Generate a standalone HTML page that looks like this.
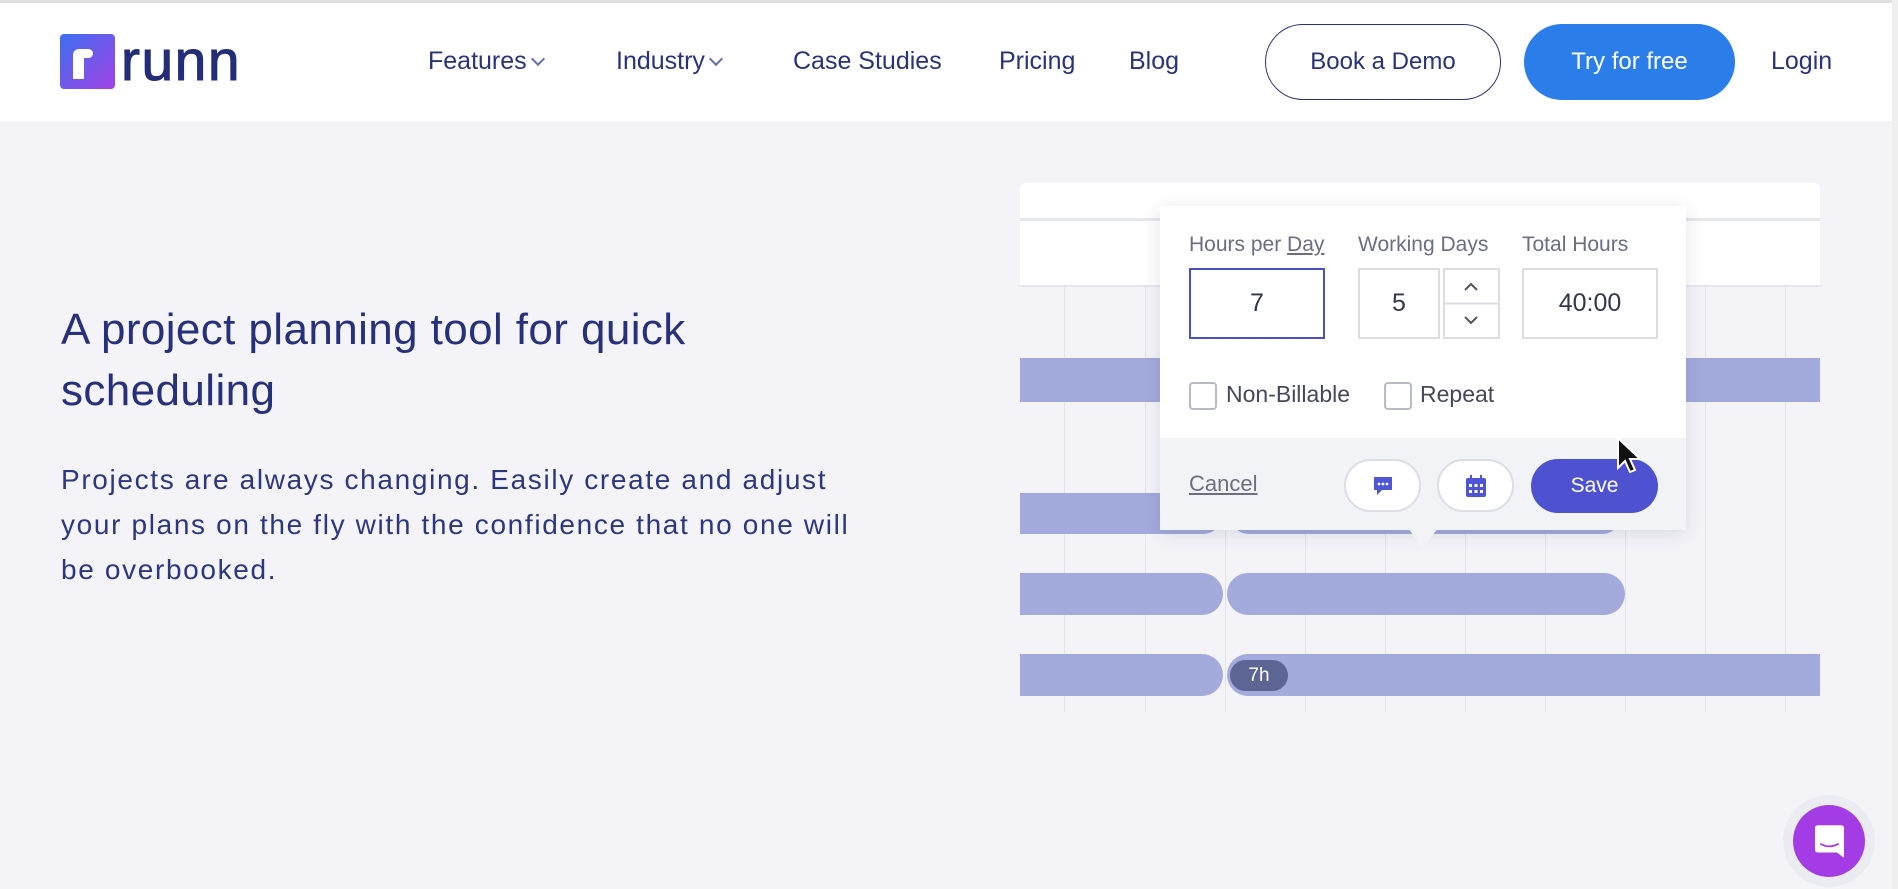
<!DOCTYPE html>
<html><head><meta charset="utf-8"><style>
*{margin:0;padding:0;box-sizing:border-box}
body{width:1898px;height:889px;overflow:hidden;background:#f3f3f8;font-family:"Liberation Sans",sans-serif;position:relative;color:#27307a}
.a{position:absolute}
#nav{left:0;top:0;width:1892px;height:121px;background:#fff;border-top:3px solid #dedee3}
.ni{position:absolute;top:43px;font-size:25px;color:#2a3278;line-height:30px}
.chev{display:inline-block;width:10px;height:10px;border-right:2px solid #6a70b0;border-bottom:2px solid #6a70b0;transform:rotate(45deg);margin-left:6px;position:relative;top:-5px}
h1{position:absolute;left:61px;top:299px;font-size:44px;font-weight:normal;line-height:61px;color:#27307a;letter-spacing:.4px}
p.d{position:absolute;left:61px;top:457px;font-size:28px;line-height:45px;color:#2d3780;letter-spacing:1.65px;width:900px}
.bar{position:absolute;background:#a2abdb}
.vl{position:absolute;top:287px;width:1px;height:425px;background:#e2e4ea}
.lbl{position:absolute;top:233px;font-size:21px;color:#6b6e80}
.box{position:absolute;top:268px;height:71px;border:2px solid #dcdde3;background:#fff;font-size:25px;color:#33374a;display:flex;align-items:center;justify-content:center}
.cb{position:absolute;top:382px;width:28px;height:28px;border:2px solid #b8bac6;border-radius:4px;background:#fff}
.ct{position:absolute;top:381px;font-size:23px;color:#454958}
.rb{position:absolute;top:459px;width:77px;height:53px;border:2px solid #dcdde5;border-radius:27px;background:#fff;display:flex;align-items:center;justify-content:center}
</style></head><body>
<div id="nav" class="a">
  <div class="a" style="left:60px;top:31px;width:55px;height:55px;border-radius:4px;background:linear-gradient(135deg,#3d6ff0,#a143e6)"></div>
  <div class="a" style="left:73px;top:46px;width:11px;height:30px;background:#fff;border-radius:6px 0 0 0"></div>
  <div class="a" style="left:83px;top:46px;width:10px;height:9px;background:#fff;border-radius:0 5px 5px 0"></div>
  <div class="a" style="left:121px;top:25px;font-size:57px;color:#232d78;letter-spacing:1.5px;-webkit-text-stroke:1px #232d78">runn</div>
  <div class="ni" style="left:428px">Features<span class="chev"></span></div>
  <div class="ni" style="left:616px">Industry<span class="chev"></span></div>
  <div class="ni" style="left:793px">Case Studies</div>
  <div class="ni" style="left:999px">Pricing</div>
  <div class="ni" style="left:1129px">Blog</div>
  <div class="a" style="left:1265px;top:21px;width:236px;height:76px;border:1.5px solid #2a3278;border-radius:38px;font-size:24px;color:#2a3278;display:flex;align-items:center;justify-content:center">Book a Demo</div>
  <div class="a" style="left:1524px;top:21px;width:211px;height:76px;background:#2b7de9;border-radius:38px;font-size:24px;color:#fff;display:flex;align-items:center;justify-content:center">Try for free</div>
  <div class="ni" style="left:1771px">Login</div>
</div>
<div class="a" style="left:1892px;top:0;width:6px;height:889px;background:#f0f0f0"></div>

<h1>A project planning tool for quick<br>scheduling</h1>
<p class="d">Projects are always changing. Easily create and adjust<br>your plans on the fly with the confidence that no one will<br>be overbooked.</p>

<div class="a" style="left:1020px;top:183px;width:800px;height:104px;background:#fff;border-radius:6px 6px 0 0;border-bottom:2px solid #e6e7ec"></div>
<div class="a" style="left:1020px;top:218px;width:800px;height:3px;background:#e6e7ec"></div>
<div class="vl" style="left:1064px"></div><div class="vl" style="left:1145px"></div><div class="vl" style="left:1225px"></div><div class="vl" style="left:1305px"></div><div class="vl" style="left:1385px"></div><div class="vl" style="left:1465px"></div><div class="vl" style="left:1545px"></div><div class="vl" style="left:1625px"></div><div class="vl" style="left:1705px"></div><div class="vl" style="left:1785px"></div>

<div class="bar" style="left:1020px;top:358px;width:800px;height:44px"></div>
<div class="bar" style="left:1020px;top:493px;width:203px;height:41px;border-radius:0 20px 20px 0"></div>
<div class="bar" style="left:1229px;top:493px;width:393px;height:41px;border-radius:20px"></div>
<div class="bar" style="left:1020px;top:573px;width:203px;height:42px;border-radius:0 21px 21px 0"></div>
<div class="bar" style="left:1227px;top:573px;width:398px;height:42px;border-radius:21px"></div>
<div class="bar" style="left:1020px;top:654px;width:203px;height:42px;border-radius:0 21px 21px 0"></div>
<div class="bar" style="left:1227px;top:654px;width:593px;height:42px;border-radius:21px 0 0 21px"></div>
<div class="a" style="left:1230px;top:660px;width:58px;height:31px;border-radius:16px;background:#5d6594;color:#fff;font-size:19px;display:flex;align-items:center;justify-content:center">7h</div>

<div class="a" style="left:1160px;top:206px;width:526px;height:324px;background:#fff;box-shadow:0 4px 18px rgba(40,40,80,.12)"></div>
<div class="a" style="left:1160px;top:438px;width:526px;height:92px;background:#f2f3f7"></div>
<div class="a" style="left:1408px;top:528px;width:0;height:0;border-left:15px solid transparent;border-right:15px solid transparent;border-top:20px solid #f2f3f7"></div>
<div class="lbl" style="left:1189px">Hours per <u>Day</u></div>
<div class="lbl" style="left:1358px">Working Days</div>
<div class="lbl" style="left:1522px">Total Hours</div>
<div class="box" style="left:1189px;width:136px;border-color:#4a50c0">7</div>
<div class="box" style="left:1358px;width:82px">5</div>
<div class="box" style="left:1443px;width:57px;height:71px;flex-direction:column;padding:0">
<svg width="57" height="67" viewBox="0 0 57 67"><path d="M22 20l6-6 6 6M22 47l6 6 6-6" stroke="#555" stroke-width="2" fill="none"/><path d="M0 33.5h57" stroke="#dcdde3" stroke-width="2"/></svg></div>
<div class="box" style="left:1522px;width:136px">40:00</div>
<div class="cb" style="left:1189px"></div><div class="ct" style="left:1226px">Non-Billable</div>
<div class="cb" style="left:1384px"></div><div class="ct" style="left:1420px">Repeat</div>
<div class="a" style="left:1189px;top:471px;font-size:22px;color:#6b6e80;text-decoration:underline">Cancel</div>
<div class="rb" style="left:1344px"><svg width="24" height="24" viewBox="0 0 24 24"><path d="M3 3h18v13h-10l-5 5v-5h-3z" fill="#4f55d4"/><circle cx="8" cy="10" r="1.4" fill="#fff"/><circle cx="12" cy="10" r="1.4" fill="#fff"/><circle cx="16" cy="10" r="1.4" fill="#fff"/></svg></div>
<div class="rb" style="left:1437px"><svg width="22" height="24" viewBox="0 0 22 24"><rect x="1" y="4" width="20" height="19" rx="2" fill="#4f55d4"/><rect x="5" y="1" width="2" height="5" fill="#4f55d4"/><rect x="15" y="1" width="2" height="5" fill="#4f55d4"/><g fill="#fff"><rect x="4" y="10" width="3" height="3"/><rect x="9.5" y="10" width="3" height="3"/><rect x="15" y="10" width="3" height="3"/><rect x="4" y="16" width="3" height="3"/><rect x="9.5" y="16" width="3" height="3"/><rect x="15" y="16" width="3" height="3"/></g></svg></div>
<div class="a" style="left:1531px;top:459px;width:127px;height:54px;border-radius:27px;background:#4e52d0;color:#fff;font-size:21px;display:flex;align-items:center;justify-content:center">Save</div>
<svg class="a" style="left:1616px;top:436px" width="26" height="40" viewBox="0 0 26 40"><path d="M2 2v30l7-7 5 11 5-2-5-11h10z" fill="#111" stroke="#fff" stroke-width="2"/></svg>

<div class="a" style="left:1783px;top:795px;width:92px;height:92px;border-radius:50%;background:#ebecf1"></div>
<div class="a" style="left:1793px;top:805px;width:72px;height:72px;border-radius:50%;background:#a43ce6"></div>
<svg class="a" style="left:1815px;top:825px" width="29" height="33" viewBox="0 0 33 37"><path d="M3 0h27a3 3 0 0 1 3 3v34l-8-6h-22a3 3 0 0 1-3-3v-25a3 3 0 0 1 3-3z" fill="#fff"/><path d="M6 21q10 6 21 0" stroke="#a43ce6" stroke-width="2" fill="none"/></svg>
</body></html>
